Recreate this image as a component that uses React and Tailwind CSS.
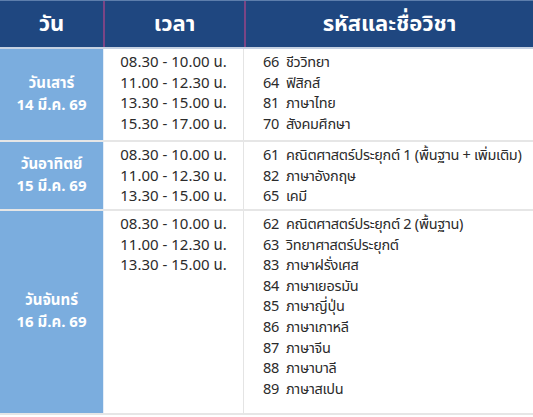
const rows = [
  {
    day: "วันเสาร์",
    date: "14 มี.ค. 69",
    times: ["08.30 - 10.00 น.", "11.00 - 12.30 น.", "13.30 - 15.00 น.", "15.30 - 17.00 น."],
    subjects: [
      ["66", "ชีววิทยา"],
      ["64", "ฟิสิกส์"],
      ["81", "ภาษาไทย"],
      ["70", "สังคมศึกษา"],
    ],
    h: "h-[93px]",
  },
  {
    day: "วันอาทิตย์",
    date: "15 มี.ค. 69",
    times: ["08.30 - 10.00 น.", "11.00 - 12.30 น.", "13.30 - 15.00 น."],
    subjects: [
      ["61", "คณิตศาสตร์ประยุกต์ 1 (พื้นฐาน + เพิ่มเติม)"],
      ["82", "ภาษาอังกฤษ"],
      ["65", "เคมี"],
    ],
    h: "h-[69px]",
  },
  {
    day: "วันจันทร์",
    date: "16 มี.ค. 69",
    times: ["08.30 - 10.00 น.", "11.00 - 12.30 น.", "13.30 - 15.00 น."],
    subjects: [
      ["62", "คณิตศาสตร์ประยุกต์ 2 (พื้นฐาน)"],
      ["63", "วิทยาศาสตร์ประยุกต์"],
      ["83", "ภาษาฝรั่งเศส"],
      ["84", "ภาษาเยอรมัน"],
      ["85", "ภาษาญี่ปุ่น"],
      ["86", "ภาษาเกาหลี"],
      ["87", "ภาษาจีน"],
      ["88", "ภาษาบาลี"],
      ["89", "ภาษาสเปน"],
    ],
    h: "h-[204px]",
  },
];

export default function App() {
  return (
    <div
      className="w-[533px] h-[417px] overflow-hidden bg-white text-[#2b2b2b]"
      style={{ fontFamily: '"Noto Sans Thai", "Noto Sans", "Liberation Sans", sans-serif' }}
    >
      {/* header */}
      <div className="flex h-[49px] bg-[#1f4780] border-t border-[#5d7eac] border-b-2 border-b-[#c5d1e2] text-white font-bold text-[22px]">
        <div className="w-[103px] shrink-0 flex items-center justify-center">วัน</div>
        <div className="w-[2px] shrink-0 bg-[#7a4585]" />
        <div className="w-[139px] shrink-0 flex items-center justify-center">เวลา</div>
        <div className="w-[2px] shrink-0 bg-[#7a4585]" />
        <div className="flex-1 flex items-center justify-center">รหัสและชื่อวิชา</div>
      </div>

      {rows.map((r, i) => (
        <div key={i} className={`flex ${r.h} border-b-2 border-[#e6e6e6]`}>
          <div className="w-[104px] shrink-0 bg-[#7badde] border-r border-[#e3edf8] flex flex-col items-center justify-center text-white font-bold text-[15px] leading-[22px]">
            <div>{r.day}</div>
            <div>{r.date}</div>
          </div>
          <div className="w-[140px] shrink-0 border-r border-[#e4e4e4] pt-[4px] flex flex-col items-center text-[15px] leading-[20.6px]">
            {r.times.map((t) => (
              <div key={t}>{t}</div>
            ))}
          </div>
          <div className="flex-1 min-w-0 overflow-hidden pl-[19px] pt-[4px] text-[14.5px] leading-[20.6px] whitespace-pre tracking-[-0.3px]">
            {r.subjects.map(([c, n]) => (
              <div key={c}>{c + "  " + n}</div>
            ))}
          </div>
        </div>
      ))}
    </div>
  );
}
